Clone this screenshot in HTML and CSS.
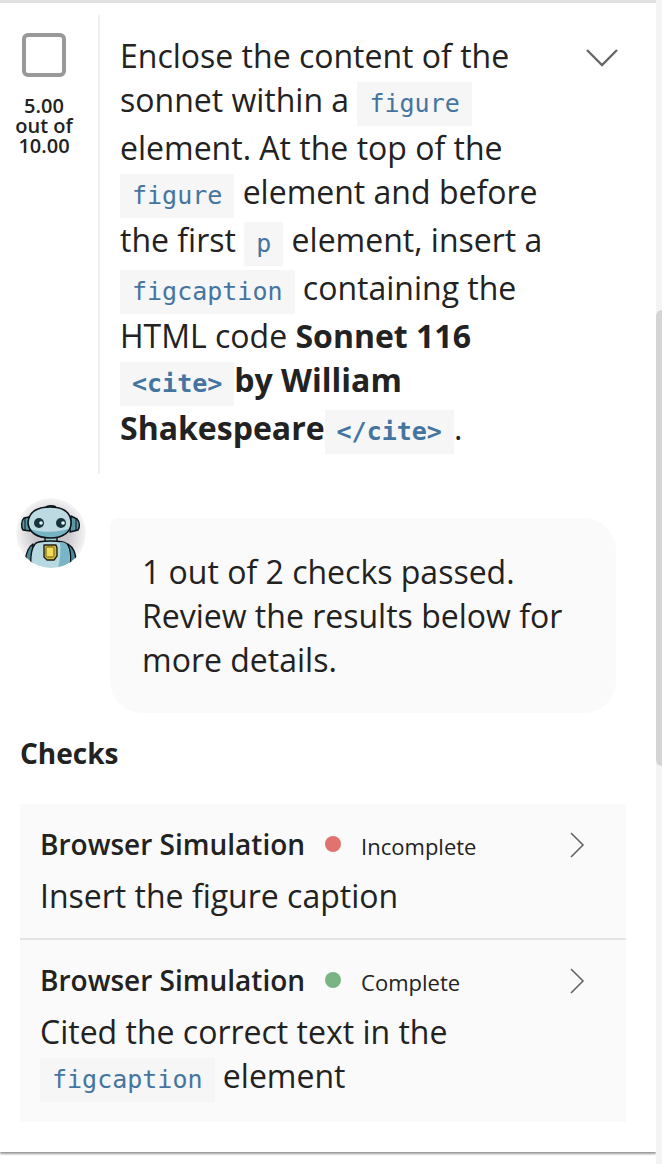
FILE: index.html
```html
<!DOCTYPE html>
<html lang="en">
<head>
<meta charset="utf-8">
<meta name="viewport" content="width=device-width, initial-scale=1">
<title>Task checks</title>
<link rel="stylesheet" href="styles.css">
</head>
<body>
<div class="frame">
  <main class="card">
    <section class="task">
      <div class="score">
        <input class="score-box" type="checkbox" id="task-done">
        <label class="score-label" for="task-done">5.00<br>out of<br>10.00</label>
      </div>
      <div class="task-main">
        <p class="text task-text">Enclose the content of the sonnet within a <code>figure</code> element. At the top of the <code>figure</code> element and before the first <code>p</code> element, insert a <code>figcaption</code> containing the HTML code <strong>Sonnet 116 <code>&lt;cite&gt;</code>by William Shakespeare<code>&lt;/cite&gt;</code></strong>.</p>
        <button class="icon-button toggle" type="button" aria-label="Collapse task">
          <svg width="34" height="20" viewBox="0 0 34 20"><path d="M2 2l15 15L32 2" fill="none" stroke="#666" stroke-width="2.300"/></svg>
        </button>
      </div>
    </section>

    <section class="feedback">
      <svg class="avatar" width="70" height="70" viewBox="0 0 70 70" role="img" aria-label="Robot assistant">
        <defs>
          <radialGradient id="halo"><stop offset="0.5" stop-color="#c9c7cb"/><stop offset="1" stop-color="#f5f5f6"/></radialGradient>
          <clipPath id="disc"><circle cx="35" cy="35" r="35"/></clipPath>
        </defs>
        <g clip-path="url(#disc)">
          <circle cx="35" cy="35" r="35" fill="url(#halo)"/>
          <g stroke="#0b1215" stroke-width="1.4" stroke-linejoin="round">
            <path d="M30 10c0-3 10-3 10 0z" fill="#5f9dae"/>
            <path d="M13 19l-5 1c-3 3-3 9-1 12l7 1z" fill="#5a97a6"/>
            <path d="M55 18l6 3c3 3 3 8 1 11l-8 2z" fill="#5a97a6"/>
            <path d="M9 20v12M60 21v11" fill="none" stroke-width="1"/>
            <path d="M29 38h12v6H29z" fill="#9bc9d3"/>
            <path d="M17 46c-5 3-7 9-8 18h9zM52 46c5 3 8 10 8 18h-9z" fill="#4c8796"/>
            <path d="M15 72c-1-13 0-21 4-26 3-4 28-4 32 0 4 5 4 13 3 26z" fill="#b9d9e2"/>
          </g>
          <path d="M44 44c4 0 6 1 7 3 3 6 2 13 2 23H42c2-8 3-18 2-26z" fill="#78b6c7"/>
          <path d="M34 9c14 0 20 6 21 14 1 11-8 17-21 17s-22-6-22-16c1-9 8-15 22-15z" fill="#bddae3"/>
          <path d="M13 30c7 5 30 5 41 0-2 6-10 10-20 10s-18-4-21-10z" fill="#76b4c4"/>
          <path d="M34 9c14 0 20 6 21 14 1 11-8 17-21 17s-22-6-22-16c1-9 8-15 22-15z" fill="none" stroke="#0b1215" stroke-width="1.6"/>
          <circle cx="23" cy="25" r="5" fill="#17343d"/><circle cx="25" cy="25" r="1.800" fill="#e9f5f7"/>
          <circle cx="45" cy="25" r="5" fill="#17343d"/><circle cx="47" cy="25" r="1.800" fill="#e9f5f7"/>
          <path d="M28 47h12l1 3v8l-3 4h-7l-3-3v-9z" fill="#d9bd38" stroke="#1d211a" stroke-width="1.400" stroke-linejoin="round"/>
          <rect x="30" y="49" width="8" height="10" rx="1.500" fill="#f0dc56" stroke="#6b5d1c" stroke-width="1"/>
        </g>
      </svg>
      <p class="text bubble">1 out of 2 checks passed. Review the results below for more details.</p>
    </section>

    <h2 class="checks-title">Checks</h2>
    <ul class="checks">
      <li class="check">
        <div class="check-head">
          <h3 class="check-name">Browser Simulation</h3>
          <span class="dot dot-bad"></span>
          <span class="status">Incomplete</span>
          <button class="icon-button next" type="button" aria-label="Show details">
            <svg width="16" height="26" viewBox="0 0 16 26"><path d="M1 1l12 12L1 25" fill="none" stroke="#666" stroke-width="1.600"/></svg>
          </button>
        </div>
        <p class="text">Insert the figure caption</p>
      </li>
      <li class="check">
        <div class="check-head">
          <h3 class="check-name">Browser Simulation</h3>
          <span class="dot dot-good"></span>
          <span class="status">Complete</span>
          <button class="icon-button next" type="button" aria-label="Show details">
            <svg width="16" height="26" viewBox="0 0 16 26"><path d="M1 1l12 12L1 25" fill="none" stroke="#666" stroke-width="1.600"/></svg>
          </button>
        </div>
        <p class="text">Cited the correct text in the <code>figcaption</code> element</p>
      </li>
    </ul>
  </main>
  <div class="scrollbar"><div class="thumb"></div></div>
</div>
</body>
</html>
```
FILE: styles.css
```css
* { box-sizing: border-box; }

body {
  margin: 0;
  background: #fff;
  color: #222;
  font-family: "Open Sans", "Noto Sans", sans-serif;
}

h2, h3, p, ul { margin: 0; padding: 0; }

.frame {
  display: flex;
  min-height: 100vh;
}

.card {
  flex: 1;
  align-self: flex-start;
  min-width: 0;
  padding: 12px 30px 30px 20px;
  border-top: 3px solid #e0e0e0;
  box-shadow: 0 2px 2px #999;
}

.scrollbar {
  flex: none;
  width: 6px;
  padding-top: 310px;
  background: #f4f4f4;
}

.thumb {
  height: 456px;
  border-radius: 6px 0 0 6px;
  background: #d5d5d5;
}

.text {
  font-size: 32px;
  line-height: 44px;
}

code {
  display: inline-block;
  padding: 0 12px;
  background: #f6f6f6;
  color: #4475a0;
  font-family: "DejaVu Sans Mono", monospace;
  font-size: 25px;
  line-height: 44px;
}

.icon-button {
  display: flex;
  padding: 0;
  border: 0;
  background: none;
}

.task {
  display: flex;
}

.score {
  display: flex;
  flex-direction: column;
  align-items: center;
  flex: none;
  gap: 19px;
  width: 78px;
  margin-left: -15px;
  padding-top: 18px;
}

.score-box {
  appearance: none;
  width: 44px;
  height: 44px;
  margin: 0;
  border: 4px solid #999;
  border-radius: 6px;
  background: #fff;
}

.score-label {
  font-size: 20px;
  font-weight: 600;
  line-height: 20px;
  text-align: center;
  white-space: nowrap;
}

.task-main {
  display: flex;
  flex: 1;
  align-items: flex-start;
  justify-content: space-between;
  gap: 20px;
  margin-left: 15px;
  padding: 19px 7px 20px 20px;
  border-left: 2px solid #f0f0f0;
}

.task-text { flex: 1; }

.toggle { padding-top: 14px; }

.feedback {
  display: flex;
  gap: 24px;
  padding: 24px 10px 0 0;
}

.avatar {
  flex: none;
  margin-left: -4px;
}

.bubble {
  flex: 1;
  margin-top: 20px;
  padding: 32px 32px 31px;
  border-radius: 8px 32px 32px 32px;
  background: #fafafa;
}

.checks-title {
  margin: 20px 0 31px;
  font-size: 28px;
  font-weight: 700;
  line-height: 40px;
}

.checks {
  list-style: none;
  background: #fafafa;
}

.check { padding: 20px; }

.check + .check { border-top: 2px solid #e4e4e4; }

.check-head {
  display: flex;
  align-items: center;
  margin-bottom: 10px;
}

.check-name {
  font-size: 28px;
  font-weight: 600;
  line-height: 40px;
}

.dot {
  width: 16px;
  height: 16px;
  margin: 0 20px;
  border-radius: 50%;
}

.dot-bad { background: #e0736f; }
.dot-good { background: #79b583; }

.status {
  padding-top: 4px;
  font-size: 22px;
  line-height: 36px;
}

.next {
  margin-left: auto;
  padding: 2px 20px 0 0;
}
```
